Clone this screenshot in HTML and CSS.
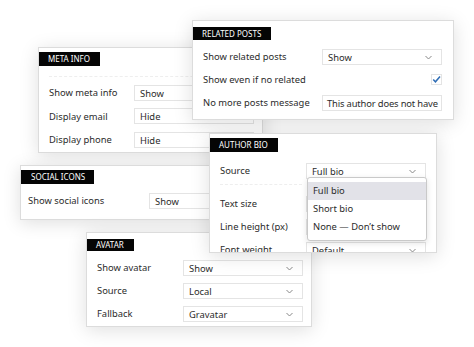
FILE: index.html
```html
<!DOCTYPE html>
<html lang="en">
<head>
    <meta charset="UTF-8">
    <title>Author box settings</title>
    <link rel="stylesheet" href="styles.css">
</head>
<body>
    <div class="canvas">

        <div class="panel meta">
            <div class="tab">META INFO</div>
            <div class="sep"></div>
            <div class="row"><span>Show meta info</span><div class="select">Show</div></div>
            <div class="row"><span>Display email</span><div class="select">Hide</div></div>
            <div class="row"><span>Display phone</span><div class="select">Hide</div></div>
        </div>

        <div class="panel related">
            <div class="tab">RELATED POSTS</div>
            <div class="row"><span>Show related posts</span><div class="select drop">Show</div></div>
            <div class="row"><span>Show even if no related</span><div class="check"></div></div>
            <div class="row"><span>No more posts message</span><div class="select text">This author does not have</div></div>
        </div>

        <div class="panel social">
            <div class="tab">SOCIAL ICONS</div>
            <div class="row"><span>Show social icons</span><div class="select">Show</div></div>
        </div>

        <div class="panel avatar">
            <div class="tab">AVATAR</div>
            <div class="row"><span>Show avatar</span><div class="select drop">Show</div></div>
            <div class="row"><span>Source</span><div class="select drop">Local</div></div>
            <div class="row"><span>Fallback</span><div class="select drop">Gravatar</div></div>
        </div>

        <div class="panel bio">
            <div class="tab">AUTHOR BIO</div>
            <div class="row first"><span>Source</span><div class="select drop open">Full bio</div></div>
            <div class="sep"></div>
            <div class="row"><span>Text size</span><div class="select">Normal</div></div>
            <div class="row"><span>Line height (px)</span><div class="select">Normal</div></div>
            <div class="row"><span>Font weight</span><div class="select drop">Default</div></div>

            <ul class="menu">
                <li class="active">Full bio</li>
                <li>Short bio</li>
                <li>None — Don’t show</li>
            </ul>
        </div>

    </div>

    <script>
        // chevrons for the dropdown fields
        document.querySelectorAll('.select.drop').forEach(el => {
            el.insertAdjacentHTML('beforeend',
                '<svg class="chev" width="7" height="5" viewBox="0 0 7 5"><polyline points="0.5,1 3.5,4 6.5,1" fill="none" stroke="#888" stroke-width="1"/></svg>');
        });
        document.querySelectorAll('.check').forEach(el => {
            el.innerHTML = '<svg width="11" height="11" viewBox="0 0 11 11"><polyline points="1.5,5.5 4.2,8.3 9.8,1.8" fill="none" stroke="#2f6db5" stroke-width="1.8"/></svg>';
        });
    </script>
</body>
</html>
```

FILE: styles.css
```css
* {
    box-sizing: border-box;
}
body {
    margin: 0;
    background-color: #fff;
    font-family: "Noto Sans", "Open Sans", sans-serif;
    font-size: 9.4px;
    color: #2b2b2b;
}
.canvas {
    position: relative;
    width: 474px;
    height: 347px;
    overflow: hidden;
}
.panel {
    position: absolute;
    background-color: #fff;
    border: 1px solid #dcdcdc;
    box-shadow: 0 3px 18px rgba(0,0,0,0.13);
    overflow: hidden;
}
.tab {
    display: inline-block;
    background-color: #050505;
    color: #fff;
    font-size: 8px;
    line-height: 14px;
    height: 14px;
    padding: 0 10px 0 9px;
}
.row {
    display: flex;
    align-items: center;
    justify-content: space-between;
    height: 23px;
}
.select {
    position: relative;
    width: 120px;
    height: 16px;
    line-height: 15px;
    border: 1px solid #e4e4e4;
    padding: 0 5px;
    background-color: #fff;
    white-space: nowrap;
    overflow: hidden;
}
.select.text {
    padding: 0 4px;
    letter-spacing: -0.15px;
}
.chev {
    position: absolute;
    right: 9px;
    top: 5px;
}
.check {
    width: 11px;
    height: 11px;
    border: 1px solid #e4e4e4;
    display: flex;
    align-items: center;
    justify-content: center;
}
.check svg {
    margin-top: -1px;
}
.sep {
    border-top: 1px dashed #eeeeee;
}

/* panels */
.meta {
    left: 38px;
    top: 47px;
    width: 225px;
    height: 106px;
    padding: 4px 8px 0 0;
}
.meta .sep {
    margin: 10px 0 4px 10px;
}
.meta .row {
    padding-left: 10px;
    height: 23.5px;
}

.related {
    left: 192px;
    top: 20px;
    width: 262px;
    height: 100px;
    padding: 6px 11px 0 0;
}
.related .tab {
    height: 13px;
    line-height: 13px;
    margin-bottom: 5px;
}
.related .row {
    padding-left: 10px;
}

.social {
    left: 20px;
    top: 165px;
    width: 260px;
    height: 55px;
    padding: 4px 0 0 0;
}
.social .tab {
    padding-left: 10px;
    padding-right: 9px;
    margin-bottom: 5px;
}
.social .row {
    padding-left: 7px;
    justify-content: flex-start;
}
.social .row span {
    width: 121px;
}

.bio {
    left: 209px;
    top: 133px;
    width: 228px;
    height: 120px;
    padding: 4px 10px 0 0;
}
.bio .row {
    padding-left: 10px;
}
.bio .row.first {
    margin-top: 7px;
}
.bio .sep {
    margin: 2px 0 7px 10px;
    width: 82px;
}

.avatar {
    left: 86px;
    top: 232px;
    width: 226px;
    height: 95px;
    padding: 5px 8px 0 0;
}
.avatar .tab {
    height: 12px;
    line-height: 12px;
    padding-right: 10px;
    margin-bottom: 5px;
}
.avatar .row {
    padding-left: 10px;
}

/* open dropdown */
.menu {
    position: absolute;
    left: 97px;
    top: 43px;
    width: 120px;
    margin: 0;
    padding: 4px 0;
    list-style: none;
    background-color: #fff;
    border: 1px solid #c9c9c9;
    border-radius: 3px;
    box-shadow: 0 2px 6px rgba(0,0,0,0.12);
}
.menu li {
    height: 18px;
    line-height: 18px;
    padding: 0 5px;
}
.menu li.active {
    background-color: #e2e2e8;
}
```
